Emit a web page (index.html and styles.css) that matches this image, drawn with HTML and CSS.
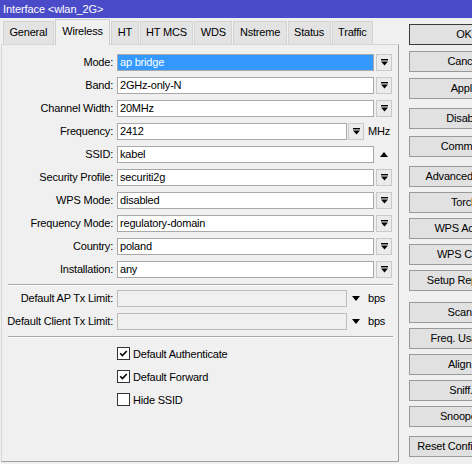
FILE: index.html
```html
<!DOCTYPE html>
<html>
<head>
<meta charset="utf-8">
<link rel="stylesheet" href="styles.css">
</head>
<body>
<div class="titlebar">Interface &lt;wlan_2G&gt;</div>
<div class="window">
  <div class="left">
    <div class="tabs">
      <div class="tab">General</div>
      <div class="tab active">Wireless</div>
      <div class="tab">HT</div>
      <div class="tab">HT MCS</div>
      <div class="tab">WDS</div>
      <div class="tab">Nstreme</div>
      <div class="tab">Status</div>
      <div class="tab">Traffic</div>
    </div>
    <div class="panel">
      <div class="row"><div class="label">Mode:</div><div class="field"><div class="input selected">ap bridge</div><div class="dd"><svg width="7" height="7" viewBox="0 0 7 7"><rect x="0" y="0" width="7" height="1.4"/><path d="M0 2.6H7L3.5 6.6Z"/></svg></div></div></div>
      <div class="row"><div class="label">Band:</div><div class="field"><div class="input">2GHz-only-N</div><div class="dd"><svg width="7" height="7" viewBox="0 0 7 7"><rect x="0" y="0" width="7" height="1.4"/><path d="M0 2.6H7L3.5 6.6Z"/></svg></div></div></div>
      <div class="row"><div class="label">Channel Width:</div><div class="field"><div class="input">20MHz</div><div class="dd"><svg width="7" height="7" viewBox="0 0 7 7"><rect x="0" y="0" width="7" height="1.4"/><path d="M0 2.6H7L3.5 6.6Z"/></svg></div></div></div>
      <div class="row"><div class="label">Frequency:</div><div class="field unitfield"><div class="input">2412</div><div class="dd"><svg width="7" height="7" viewBox="0 0 7 7"><rect x="0" y="0" width="7" height="1.4"/><path d="M0 2.6H7L3.5 6.6Z"/></svg></div><div class="unit">MHz</div></div></div>
      <div class="row"><div class="label">SSID:</div><div class="field"><div class="input">kabel</div><div class="slot"><svg width="8" height="5" viewBox="0 0 8 5"><path d="M0 5H8L4 0Z"/></svg></div></div></div>
      <div class="row"><div class="label">Security Profile:</div><div class="field"><div class="input">securiti2g</div><div class="dd"><svg width="7" height="7" viewBox="0 0 7 7"><rect x="0" y="0" width="7" height="1.4"/><path d="M0 2.6H7L3.5 6.6Z"/></svg></div></div></div>
      <div class="row"><div class="label">WPS Mode:</div><div class="field"><div class="input">disabled</div><div class="dd"><svg width="7" height="7" viewBox="0 0 7 7"><rect x="0" y="0" width="7" height="1.4"/><path d="M0 2.6H7L3.5 6.6Z"/></svg></div></div></div>
      <div class="row"><div class="label">Frequency Mode:</div><div class="field"><div class="input">regulatory-domain</div><div class="dd"><svg width="7" height="7" viewBox="0 0 7 7"><rect x="0" y="0" width="7" height="1.4"/><path d="M0 2.6H7L3.5 6.6Z"/></svg></div></div></div>
      <div class="row"><div class="label">Country:</div><div class="field"><div class="input">poland</div><div class="dd"><svg width="7" height="7" viewBox="0 0 7 7"><rect x="0" y="0" width="7" height="1.4"/><path d="M0 2.6H7L3.5 6.6Z"/></svg></div></div></div>
      <div class="row"><div class="label">Installation:</div><div class="field"><div class="input">any</div><div class="dd"><svg width="7" height="7" viewBox="0 0 7 7"><rect x="0" y="0" width="7" height="1.4"/><path d="M0 2.6H7L3.5 6.6Z"/></svg></div></div></div>
      <div class="sep sep1"></div>
      <div class="row"><div class="label">Default AP Tx Limit:</div><div class="field unitfield"><div class="input disabled"></div><div class="slot"><svg width="8" height="5" viewBox="0 0 8 5"><path d="M0 0H8L4 5Z"/></svg></div><div class="unit">bps</div></div></div>
      <div class="row"><div class="label">Default Client Tx Limit:</div><div class="field unitfield"><div class="input disabled"></div><div class="slot"><svg width="8" height="5" viewBox="0 0 8 5"><path d="M0 0H8L4 5Z"/></svg></div><div class="unit">bps</div></div></div>
      <div class="sep sep2"></div>
      <div class="checks">
        <div class="check"><div class="box"><svg width="11" height="11" viewBox="0 0 11 11"><path d="M2.2 5.3L4.4 7.5L8.8 3" stroke="#000" stroke-width="1.6" fill="none"/></svg></div>Default Authenticate</div>
        <div class="check"><div class="box"><svg width="11" height="11" viewBox="0 0 11 11"><path d="M2.2 5.3L4.4 7.5L8.8 3" stroke="#000" stroke-width="1.6" fill="none"/></svg></div>Default Forward</div>
        <div class="check"><div class="box"></div>Hide SSID</div>
      </div>
    </div>
  </div>
  <div class="buttons">
    <div class="btn default p27">OK</div>
    <div class="btn p27">Cancel</div>
    <div class="btn">Apply</div>
    <div class="btn g4">Disable</div>
    <div class="btn g2">Comment</div>
    <div class="btn g4">Advanced Mode</div>
    <div class="btn">Torch</div>
    <div class="btn">WPS Accept</div>
    <div class="btn">WPS Client</div>
    <div class="btn">Setup Repeater</div>
    <div class="btn g6">Scan...</div>
    <div class="btn">Freq. Usage...</div>
    <div class="btn">Align...</div>
    <div class="btn">Sniff...</div>
    <div class="btn">Snooper...</div>
    <div class="btn g4">Reset Configuration</div>
  </div>
</div>
</body>
</html>
```
FILE: styles.css
```css
* { box-sizing: border-box; }
html, body { margin: 0; padding: 0; }
body {
  width: 472px;
  height: 464px;
  overflow: hidden;
  background: #f0f0f0;
  font-family: "Liberation Sans", Arial, sans-serif;
  font-size: 11px;
  letter-spacing: -0.2px;
  color: #000;
}
.titlebar {
  height: 18px;
  background: #4a4bc9;
  color: #fff;
  line-height: 18px;
  padding-left: 3px;
  font-size: 11px;
  letter-spacing: -0.1px;
}
.window { display: flex; align-items: flex-start; }
.left { width: 399px; flex: none; }
.tabs {
  display: flex;
  align-items: flex-end;
  height: 26px;
  padding-left: 3px;
  position: relative;
  z-index: 1;
}
.tab {
  height: 23px;
  line-height: 21px;
  padding: 0 5.5px;
  background: #e3e3e3;
  border: 1px solid #d4d4d4;
  border-bottom: none;
  margin-right: 1px;
  white-space: nowrap;
}
.tab.active {
  height: 26px;
  line-height: 22px;
  background: #f0f0f0;
  border-color: #cdcdcd;
  margin-bottom: -1px;
  padding: 0 6.5px;
}
.panel {
  height: 418px;
  margin-left: 1px;
  border: 1px solid;
  border-color: #d6d6d6 #a0a0a0 #a0a0a0 #d6d6d6;
  padding: 9px 6px 0 0;
}
.row {
  display: grid;
  grid-template-columns: 115px 1fr;
  height: 17px;
  margin-bottom: 6px;
}
.label {
  text-align: right;
  padding-right: 4px;
  line-height: 17px;
  white-space: nowrap;
}
.field { display: flex; height: 17px; }
.input {
  flex: 1;
  min-width: 0;
  height: 17px;
  border: 1px solid #a9a9a9;
  background: #fff;
  padding-left: 2px;
  line-height: 15px;
  white-space: nowrap;
  overflow: hidden;
}
.input.selected { background: #3399ff; color: #fff; }
.input.disabled { background: #f0f0f0; border-color: #bdbdbd; }
.dd {
  flex: none;
  width: 16px;
  height: 17px;
  margin-left: 2px;
  background: #ebebeb;
  border: 1px solid #c9c9c9;
  display: flex;
  align-items: center;
  justify-content: center;
}
.slot {
  flex: none;
  width: 16px;
  height: 17px;
  margin-left: 2px;
  display: flex;
  align-items: center;
  justify-content: center;
}
.unitfield .dd, .unitfield .slot { margin-left: 1px; }
.unit {
  flex: none;
  width: 28px;
  padding-left: 4px;
  line-height: 17px;
}
.sep {
  border-top: 1px solid #a8a8a8;
  border-bottom: 1px solid #ffffff;
  margin-left: 6px;
  margin-right: -1px;
}
.sep1 { margin-top: 2px; margin-bottom: 4px; }
.sep2 { margin-top: 0; margin-bottom: 7px; }
.checks { padding-left: 115px; }
.check {
  display: flex;
  align-items: center;
  height: 17px;
  margin-bottom: 6px;
  white-space: nowrap;
}
.box {
  width: 13px;
  height: 13px;
  border: 1px solid #333;
  background: #fff;
  margin-right: 3px;
  display: flex;
  align-items: center;
  justify-content: center;
}
.buttons {
  flex: none;
  margin-left: 10px;
  padding-top: 6px;
  display: flex;
  flex-direction: column;
}
.btn {
  flex: none;
  width: 110px;
  height: 21px;
  border: 1px solid #999;
  background: #e1e1e1;
  text-align: center;
  line-height: 19px;
  margin-bottom: 5px;
  white-space: nowrap;
}
.btn.default { border-color: #3a3a3a; }
.btn.p27 { margin-bottom: 6px; }
.btn.g2 { margin-top: 2px; }
.btn.g4 { margin-top: 4px; }
.btn.g6 { margin-top: 6px; }
```
